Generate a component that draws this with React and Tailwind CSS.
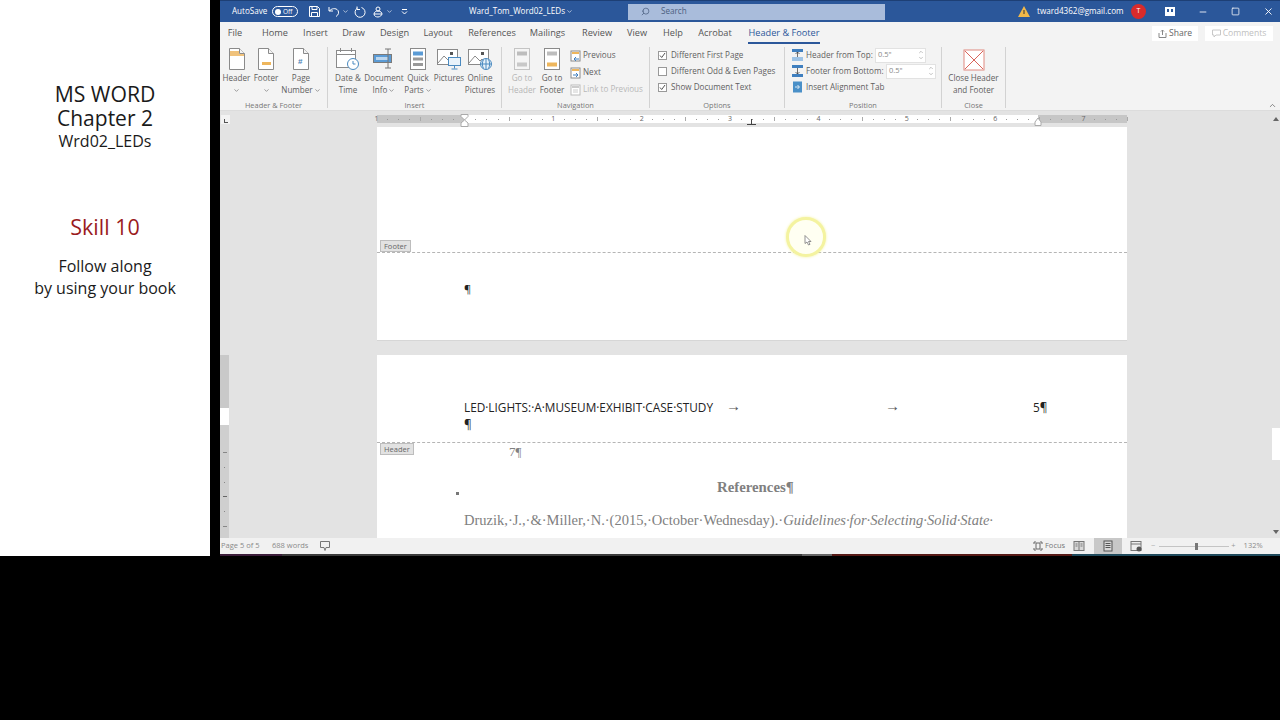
import { ChevronDown, ChevronUp, Search, Minus, Square, X } from 'lucide-react';

const tabs = [
  ['File', 'w-[30px]'],
  ['Home', 'w-[50px]'],
  ['Insert', 'w-[31px]'],
  ['Draw', 'w-[45px]'],
  ['Design', 'w-[37px]'],
  ['Layout', 'w-[50px]'],
  ['References', 'w-[58px]'],
  ['Mailings', 'w-[53px]'],
  ['Review', 'w-[46px]'],
  ['View', 'w-[34px]'],
  ['Help', 'w-[38px]'],
  ['Acrobat', 'w-[46px]'],
];

function PageIcon({ band }) {
  return (
    <svg width="20" height="24" viewBox="0 0 20 24" fill="none">
      <path d="M2.5 1.5h10l5 5v16h-15z" fill="#fff" stroke="#8a8a8a" />
      <path d="M12.5 1.5v5h5" fill="#f3f3f3" stroke="#8a8a8a" />
      {band === 'top' && <path d="M3 4h9v3h5v2H3z" fill="#f0c27b" />}
      {band === 'bottom' && <rect x="6" y="15" width="9" height="3" fill="#eeb65c" />}
      {band === 'num' && <text x="7" y="17" fontSize="8" fontWeight="700" fill="#4b7fb5" fontFamily="Liberation Sans, sans-serif">#</text>}
    </svg>
  );
}

function CalendarIcon() {
  return (
    <svg width="26" height="24" viewBox="0 0 26 24" fill="none">
      <rect x="1.5" y="3.5" width="19" height="17" fill="#fff" stroke="#8a8a8a" />
      <path d="M1.5 7.5h19M5.5 1v4M16.5 1v4" stroke="#8a8a8a" />
      <circle cx="18" cy="17" r="5.5" fill="#fff" stroke="#4a8ac0" />
      <path d="M18 14v3h2.5" stroke="#4a8ac0" />
    </svg>
  );
}

function DocInfoIcon() {
  return (
    <svg width="24" height="24" viewBox="0 0 24 24" fill="none">
      <rect x="1.5" y="7.5" width="18" height="8" fill="#5b9bd5" stroke="#7a7a7a" />
      <rect x="4" y="10" width="12" height="3" fill="#bcd6ee" />
      <path d="M13 2h6M13 21h6M16 2v19" stroke="#777" />
    </svg>
  );
}

function QuickIcon() {
  return (
    <svg width="18" height="24" viewBox="0 0 18 24" fill="none">
      <rect x="1.5" y="1.5" width="15" height="21" fill="#fff" stroke="#8a8a8a" />
      <rect x="4" y="4.5" width="10" height="4" fill="#5b9bd5" />
      <rect x="4" y="10.5" width="10" height="3" fill="#999" />
      <rect x="4" y="16" width="10" height="3" fill="#999" />
    </svg>
  );
}

function PictureIcon({ online }) {
  return (
    <svg width="26" height="24" viewBox="0 0 26 24" fill="none">
      <rect x="1.5" y="2.5" width="20" height="15" fill="#fff" stroke="#8a8a8a" />
      <path d="M2 16l6-7 5 5 2-2 5 5" stroke="#8a8a8a" />
      <rect x="14" y="5" width="3" height="3" fill="#555" />
      {online ? (
        <g stroke="#4a8ac0">
          <circle cx="19" cy="17" r="5.5" fill="#e8f2fa" />
          <path d="M13.5 17h11M19 11.5v11M16.5 12.5c-1.5 3-1.5 6 0 9M21.5 12.5c1.5 3 1.5 6 0 9" />
        </g>
      ) : (
        <g stroke="#4a8ac0">
          <rect x="12.5" y="10.5" width="12" height="8" fill="#e8f2fa" />
          <path d="M18.5 18.5v3M15.5 22h6" />
        </g>
      )}
    </svg>
  );
}

function GoToIcon({ active, top }) {
  const line = active ? '#8a8a8a' : '#c4c4c4';
  const band = active ? '#eeb65c' : '#c8c8c8';
  return (
    <svg width="18" height="24" viewBox="0 0 18 24" fill="none">
      <rect x="1.5" y="1.5" width="15" height="21" fill={active ? '#fff' : '#f5f5f5'} stroke={line} />
      <rect x="4" y="4.5" width="10" height="4" fill={top ? band : '#bdbdbd'} />
      <rect x="4" y="15.5" width="10" height="4" fill={top ? '#d2d2d2' : band} />
    </svg>
  );
}

function NavIcon({ type }) {
  const off = type === 'link';
  return (
    <svg width="11" height="12" viewBox="0 0 11 12" fill="none">
      <rect x="1" y="1" width="9" height="10" fill="#fff" stroke={off ? '#bbb' : '#8a8a8a'} />
      <rect x="2" y="2" width="7" height="2" fill={off ? '#ccc' : '#eeb65c'} />
      {type === 'prev' && <path d="M9 9H4l2-2M4 9l2 2" stroke="#3f7fbf" />}
      {type === 'next' && <path d="M3 8h5L6 6M8 8l-2 2" stroke="#3f7fbf" />}
      {off && <path d="M3 6h5M3 8h5" stroke="#ccc" />}
    </svg>
  );
}

function PosIcon({ type }) {
  return (
    <svg width="11" height="12" viewBox="0 0 11 12" fill="none">
      {type === 'top' && <><rect x="0" y="0" width="11" height="3" fill="#3f7fbf" /><rect x="0" y="8" width="11" height="4" fill="#9dc3e6" /><path d="M5.5 3v5M3.5 5l2-2 2 2" stroke="#333" strokeWidth=".7" /></>}
      {type === 'bottom' && <><rect x="0" y="9" width="11" height="3" fill="#3f7fbf" /><rect x="0" y="0" width="11" height="3" fill="#3f7fbf" /><path d="M5.5 3v6M3.5 7l2 2 2-2" stroke="#333" strokeWidth=".7" /></>}
      {type === 'tab' && <><rect x="1" y="0.5" width="9" height="11" fill="#4a90c8" /><path d="M3 6h4M5.5 4l2 2-2 2" stroke="#fff" strokeWidth=".8" /></>}
    </svg>
  );
}

function BigButton({ icon, lines, width, off, caret, under }) {
  return (
    <div className={`${width} shrink-0 flex flex-col items-center ${off ? 'text-[#b5b5b5]' : 'text-[#5f5f5f]'}`}>
      <div className="h-[24px] flex items-center justify-center">{icon}</div>
      <div className="mt-[1px] text-[8.100px] leading-[12px] text-center whitespace-nowrap">
        {lines.map((l, i) => (
          <div key={i} className="h-[12px]">
            {l}
            {caret && i === lines.length - 1 && <ChevronDown size={7} className="inline ml-[1px]" />}
          </div>
        ))}
        {under && <ChevronDown size={7} className="mx-auto mt-[3px]" />}
      </div>
    </div>
  );
}

function Group({ width, label, children }) {
  return (
    <div className={`${width} shrink-0 h-[61px] border-r border-[#d2d2d2] flex flex-col`}>
      <div className="flex-1 flex min-h-0">{children}</div>
      <div className="text-center text-[7.400px] leading-[10px] text-[#777] -mb-[2px]">{label}</div>
    </div>
  );
}

function CheckRow({ label, checked }) {
  return (
    <div className="h-[16px] flex items-center gap-[4px] text-[8.100px] text-[#5f5f5f] whitespace-nowrap">
      <div className="w-[9px] h-[9px] border border-[#999] bg-white flex items-center justify-center">
        {checked && (
          <svg width="7" height="7" viewBox="0 0 7 7" fill="none"><path d="M1 3.5l1.7 2L6 1" stroke="#555" /></svg>
        )}
      </div>
      {label}
    </div>
  );
}

function Spinner({ width }) {
  return (
    <div className={`${width} h-[15px] bg-white border border-[#e2e2e2] flex items-center justify-between pl-[2px] pr-[1px] text-[7.500px] text-[#888]`}>
      0.5"
      <div className="flex flex-col">
        <ChevronUp size={6} />
        <ChevronDown size={6} />
      </div>
    </div>
  );
}

function Ruler() {
  // one cell for each 1/8 inch, the inch numbers come from the position
  const cells = Array.from({ length: 69 }, (_, i) => i);
  return (
    <div className="w-[750px] h-[8px] mt-[4px] relative bg-[linear-gradient(90deg,#c6c6c6_87px,#fff_87px,#fff_661px,#c6c6c6_661px)]">
      <div className="flex -ml-[6px] h-full">
        {cells.map((i) => {
          const inch = (i - 8) / 8;
          let mark = <div className="w-[1px] h-[1px] bg-[#999]" />;
          if (i === 0) mark = '1';
          else if (i === 8) mark = null;
          else if (i % 8 === 0) mark = inch;
          else if (i % 4 === 0) mark = <div className="w-[1px] h-[4px] bg-[#aaa]" />;
          return (
            <div key={i} className="w-[11.060px] shrink-0 flex items-center justify-center text-[7px] text-[#666]">
              {mark}
            </div>
          );
        })}
      </div>
      <svg className="absolute left-[83px] -top-[1px]" width="9" height="13" viewBox="0 0 9 13" fill="none">
        <path d="M1 .5h7v2L4.5 6 1 2.5zM4.5 6L8 9v3.5H1V9z" fill="#fff" stroke="#aaa" />
      </svg>
      <svg className="absolute left-[370px] top-[4px]" width="9" height="6" viewBox="0 0 9 6" fill="none">
        <path d="M4.5 0v5M0 5.500h9" stroke="#444" />
      </svg>
      <svg className="absolute left-[657px] top-[2px]" width="8" height="9" viewBox="0 0 8 9" fill="none">
        <path d="M1 8.500h6V5L4 1 1 5z" fill="#fff" stroke="#aaa" />
      </svg>
    </div>
  );
}

function SideLabel({ text, className }) {
  return (
    <div className={`absolute left-[3px] h-[12px] px-[3px] bg-[#e2e2e2] border border-[#bdbdbd] text-[7.500px] leading-[10px] text-[#666] ${className}`}>
      {text}
    </div>
  );
}

function ViewIcon({ type }) {
  return (
    <svg width="12" height="12" viewBox="0 0 12 12" fill="none">
      {type === 'read' && <><rect x="1" y="1.500" width="10" height="9" fill="#d8d8d8" stroke="#777" /><path d="M6 1.500v9M2.500 4h2M2.500 6h2M7.500 4h2M7.500 6h2" stroke="#777" /></>}
      {type === 'print' && <><rect x="2" y="1" width="8" height="10" fill="#d8d8d8" stroke="#555" /><path d="M3.500 3.500h5M3.500 5.500h5M3.500 7.500h5" stroke="#555" /></>}
      {type === 'web' && <><rect x="1" y="1.500" width="10" height="9" fill="#eee" stroke="#777" /><path d="M1 4h10" stroke="#777" /><circle cx="9" cy="9" r="2.500" fill="#555" /></>}
    </svg>
  );
}

export default function App() {
  return (
    <div className="w-[1280px] h-[720px] bg-black overflow-hidden font-['Open_Sans',sans-serif]">
      <div className="h-[556px] flex">
        <div className="w-[210px] shrink-0 bg-white flex flex-col items-center text-[#1a1a1a] pt-[81px]">
          <div className="text-[21.200px] leading-[25px]">MS WORD</div>
          <div className="text-[21px] leading-[25px]">Chapter 2</div>
          <div className="text-[16px] leading-[21px]">Wrd02_LEDs</div>
          <div className="text-[21.500px] leading-[28px] text-[#9a1a20] mt-[61px]">Skill 10</div>
          <div className="text-[16px] leading-[22px] mt-[14px]">Follow along</div>
          <div className="text-[16px] leading-[22px]">by using your book</div>
        </div>
        <div className="w-[10px] shrink-0" />

        <div className="w-[1060px] shrink-0 flex flex-col relative">
          {/* title bar */}
          <div className="h-[22px] bg-[#2b579a] border-t border-[#1d3f75] flex items-center text-white text-[8.100px] relative">
            <span className="ml-[12px] w-[40px] whitespace-nowrap">AutoSave</span>
            <div className="w-[26px] h-[11px] rounded-full border border-white flex items-center gap-[2px] pl-[2px] text-[6.500px]">
              <div className="w-[6px] h-[6px] rounded-full bg-white" />
              Off
            </div>
            <svg className="ml-[11px]" width="11" height="11" viewBox="0 0 11 11" fill="none">
              <path d="M.5.500h8l2 2v8H.5zM3 .500v3h5v-3M2.500 10.500v-4h6v4" stroke="#fff" />
            </svg>
            <svg className="ml-[8px]" width="12" height="12" viewBox="0 0 12 12" fill="none">
              <path d="M1 1v4h4M1.500 5C3 2.500 8 1.500 10 4.500c1.200 2 .5 4.500-2 6" stroke="#fff" />
            </svg>
            <ChevronDown size={7} className="ml-[2px]" />
            <svg className="ml-[5px]" width="12" height="12" viewBox="0 0 12 12" fill="none">
              <path d="M7.500 1.500a5 5 0 1 1-4 .5M3 .500v3H6" stroke="#fff" />
            </svg>
            <svg className="ml-[7px]" width="10" height="12" viewBox="0 0 10 12" fill="none">
              <circle cx="5" cy="3" r="2" stroke="#fff" />
              <path d="M5 5c3 0 4 2 4 3s-2 3-4 3-4-1-4-3 2-3 4-3zM1 8h8" stroke="#fff" />
            </svg>
            <ChevronDown size={7} className="ml-[3px]" />
            <svg className="ml-[8px]" width="7" height="7" viewBox="0 0 7 7" fill="none">
              <path d="M1 1.500h5M1 3.500l2.500 2.500L6 3.500" stroke="#fff" />
            </svg>
            <span className="ml-[61px] w-[94px] whitespace-nowrap">Ward_Tom_Word02_LEDs</span>
            <ChevronDown size={7} className="ml-[3px]" />
            <div className="ml-[55px] w-[257px] h-[16px] bg-[#a9bcdb] flex items-center text-[#4b5f80]">
              <Search size={9} className="ml-[13px] scale-x-[-1]" />
              <span className="ml-[11px]">Search</span>
            </div>
            <svg className="ml-[133px]" width="12" height="11" viewBox="0 0 12 11">
              <path d="M6 0l6 11H0z" fill="#f0b84a" />
              <path d="M5.500 4h1v4h-1z" fill="#333" />
            </svg>
            <span className="ml-[7px] w-[88px] whitespace-nowrap">tward4362@gmail.com</span>
            <div className="ml-[6px] w-[15px] h-[15px] rounded-full bg-[#d92b2b] flex items-center justify-center text-[7px]">T</div>
            <svg className="ml-[19px]" width="10" height="9" viewBox="0 0 10 9">
              <rect width="10" height="9" fill="#fff" />
              <path d="M2 2h2v3H2zM6 2h2v3H6z" fill="#2b579a" />
            </svg>
            <Minus size={10} className="ml-[23px]" />
            <Square size={9} className="ml-[23px]" />
            <X size={11} className="ml-[23px]" />
          </div>

          {/* tabs */}
          <div className="h-[22px] bg-[#f3f3f3] flex items-center text-[9.200px] text-[#555]">
            {tabs.map(([t, w]) => (
              <div key={t} className={`${w} text-center whitespace-nowrap`}>{t}</div>
            ))}
            <div className="ml-[10px] w-[72px] h-full flex flex-col items-center justify-center relative text-[#2b579a]">
              <span className="whitespace-nowrap">Header &amp; Footer</span>
              <div className="absolute bottom-0 inset-x-0 h-[2px] bg-[#2b579a]" />
            </div>
            <div className="ml-auto w-[46px] h-[15px] bg-white flex items-center justify-center gap-[2px] text-[8.600px] text-[#666] whitespace-nowrap">
              <svg width="9" height="9" viewBox="0 0 9 9" fill="none"><path d="M1 4v4.500h7V4M4.500 6V1M3 2.500L4.500 1 6 2.500" stroke="#888" /></svg>
              Share
            </div>
            <div className="ml-[7px] mr-[7px] w-[68px] h-[15px] bg-white flex items-center justify-center gap-[2px] text-[8.600px] text-[#c0c0c0] whitespace-nowrap">
              <svg width="9" height="9" viewBox="0 0 9 9" fill="none"><path d="M.500 1h8v5H4L2 8V6H.500z" stroke="#c8c8c8" /></svg>
              Comments
            </div>
          </div>

          {/* ribbon */}
          <div className="h-[67px] bg-[#f3f3f3] border-b border-[#dcdcdc] flex pt-[3px] relative">
            <Group width="w-[108px]" label="Header & Footer">
              <BigButton width="w-[33px]" icon={<PageIcon band="top" />} lines={['Header']} under />
              <BigButton width="w-[26px]" icon={<PageIcon band="bottom" />} lines={['Footer']} under />
              <BigButton width="w-[44px]" icon={<PageIcon band="num" />} lines={['Page', 'Number']} caret />
            </Group>
            <Group width="w-[174px]" label="Insert">
              <div className="w-[5px] shrink-0" />
              <BigButton width="w-[30px]" icon={<CalendarIcon />} lines={['Date &', 'Time']} />
              <BigButton width="w-[42px]" icon={<DocInfoIcon />} lines={['Document', 'Info']} caret />
              <BigButton width="w-[26px]" icon={<QuickIcon />} lines={['Quick', 'Parts']} caret />
              <BigButton width="w-[36px]" icon={<PictureIcon />} lines={['Pictures']} />
              <BigButton width="w-[26px]" icon={<PictureIcon online />} lines={['Online', 'Pictures']} />
            </Group>
            <Group width="w-[148px]" label="Navigation">
              <div className="w-[5px] shrink-0" />
              <BigButton width="w-[30px]" off icon={<GoToIcon />} lines={['Go to', 'Header']} />
              <BigButton width="w-[30px]" icon={<GoToIcon active />} lines={['Go to', 'Footer']} />
              <div className="ml-[3px] flex flex-col text-[8.100px] text-[#5f5f5f] whitespace-nowrap">
                <div className="h-[17px] flex items-center gap-[2px]"><NavIcon type="prev" />Previous</div>
                <div className="h-[17px] flex items-center gap-[2px]"><NavIcon type="next" />Next</div>
                <div className="h-[17px] flex items-center gap-[2px] text-[#b8b8b8]"><NavIcon type="link" />Link to Previous</div>
              </div>
            </Group>
            <Group width="w-[135px]" label="Options">
              <div className="pl-[8px] flex flex-col">
                <CheckRow label="Different First Page" checked />
                <CheckRow label="Different Odd & Even Pages" />
                <CheckRow label="Show Document Text" checked />
              </div>
            </Group>
            <Group width="w-[157px]" label="Position">
              <div className="pl-[7px] flex flex-col text-[8.100px] text-[#5f5f5f] whitespace-nowrap">
                <div className="h-[16px] flex items-center gap-[3px]"><PosIcon type="top" /><span className="w-[66px]">Header from Top:</span><Spinner width="w-[51px]" /></div>
                <div className="h-[16px] flex items-center gap-[3px]"><PosIcon type="bottom" /><span className="w-[77px]">Footer from Bottom:</span><Spinner width="w-[50px]" /></div>
                <div className="h-[16px] flex items-center gap-[3px]"><PosIcon type="tab" />Insert Alignment Tab</div>
              </div>
            </Group>
            <Group width="w-[64px]" label="Close">
              <div className="w-[63px] flex flex-col items-center text-[8.100px] leading-[12px] text-[#5f5f5f] whitespace-nowrap">
                <svg className="mt-[2px]" width="22" height="22" viewBox="0 0 22 22" fill="none">
                  <rect x="1" y="1" width="20" height="20" fill="#fff" stroke="#e08a80" />
                  <path d="M2 2l18 18M20 2L2 20" stroke="#d9645a" />
                </svg>
                <div className="mt-[1px]">Close Header</div>
                <div>and Footer</div>
              </div>
            </Group>
            <ChevronUp size={9} className="absolute right-[3px] bottom-[0px] text-[#666]" />
          </div>

          {/* ruler */}
          <div className="h-[16px] bg-[#e3e3e3] flex">
            <div className="w-[157px] shrink-0 pl-[1px] pt-[4px]">
              <div className="w-[9px] h-[9px] bg-[#f3f3f3] flex items-end justify-center">
                <div className="w-[4px] h-[4px] border-l border-b border-[#555] mb-[1px]" />
              </div>
            </div>
            <Ruler />
            <div className="ml-auto w-[8px] h-full flex justify-center pt-[6px]">
              <div className="w-0 h-0 border-x-[3px] border-x-transparent border-b-[4px] border-b-[#666]" />
            </div>
          </div>

          {/* document */}
          <div className="h-[411px] bg-[#e3e3e3] flex">
            <div className="w-[9px] shrink-0 flex flex-col pt-[228px]">
              <div className="h-[53px] bg-[#c9c9c9]" />
              <div className="h-[17px] bg-white" />
              <div className="flex-1 bg-[#cfcfcf] flex flex-col justify-around items-center pt-[20px] pb-[4px] text-[6px] text-[#666]">
                <div className="w-[4px] h-[1px] bg-[#888]" />
                <div className="w-[1px] h-[1px] bg-[#888]" />
                <div className="w-[1px] h-[1px] bg-[#888]" />
                <div className="w-[4px] h-[1px] bg-[#666]" />
                <div className="w-[1px] h-[1px] bg-[#888]" />
                <div className="w-[4px] h-[1px] bg-[#888]" />
              </div>
            </div>

            <div className="w-[148px] shrink-0" />

            <div className="w-[750px] shrink-0 flex flex-col">
              <div className="h-[214px] shrink-0 bg-white border-b border-[#d6d6d6] relative">
                <div className="h-[126px] border-b border-dashed border-[#b5b5b5]" />
                <SideLabel text="Footer" className="top-[113px]" />
                <div className="pl-[87px] pt-[28px] text-[11px] leading-[16px] text-[#222]">¶</div>
              </div>
              <div className="h-[14px] shrink-0" />
              <div className="flex-1 bg-white relative overflow-hidden">
                <div className="h-[88px] border-b border-dashed border-[#b5b5b5] pl-[87px] pt-[44px] text-[11.800px] text-[#222] leading-[17px]">
                  <div className="flex whitespace-nowrap">
                    <span className="w-[262px]">LED·LIGHTS:·A·MUSEUM·EXHIBIT·CASE·STUDY</span>
                    <span className="w-[159px] -mt-[2px] text-[15px] leading-[17px] text-[#555]">→</span>
                    <span className="w-[148px] -mt-[2px] text-[15px] leading-[17px] text-[#555]">→</span>
                    <span>5¶</span>
                  </div>
                  <div>¶</div>
                </div>
                <SideLabel text="Header" className="top-[88px]" />
                <div className="font-['Liberation_Serif',serif] text-[#808080]">
                  <div className="pl-[132px] pt-[1px] text-[13px] leading-[15px]">7¶</div>
                  <div className="pt-[20px] pl-[340px] font-bold text-[14.800px] leading-[16px]">References¶</div>
                  <div className="relative pl-[87px] pt-[17px] text-[14.500px] leading-[16px] whitespace-nowrap">
                    <div className="absolute left-[79px] -top-[3px] w-[3px] h-[3px] bg-[#777]" />
                    Druzik,·J.,·&amp;·Miller,·N.·(2015,·October·Wednesday).·<i>Guidelines·for·Selecting·Solid·State·</i>
                  </div>
                </div>
              </div>
            </div>

            <div className="ml-auto w-[8px] flex flex-col items-center relative">
              <div className="mt-[301px] w-full h-[32px] bg-white" />
              <div className="mt-auto mb-[4px] w-0 h-0 border-x-[3px] border-x-transparent border-t-[4px] border-t-[#666]" />
            </div>
          </div>

          {/* status bar */}
          <div className="h-[16px] bg-[#f1f1f1] flex items-center text-[7.500px] text-[#8a8a8a] whitespace-nowrap">
            <span className="ml-[1px] w-[51px]">Page 5 of 5</span>
            <span className="w-[48px]">688 words</span>
            <svg width="10" height="10" viewBox="0 0 10 10" fill="none"><path d="M.500.500h9v6H6L5 9.500 4 6.500H.500z" stroke="#777" /></svg>
            <svg className="ml-[703px]" width="10" height="10" viewBox="0 0 10 10" fill="none"><path d="M1 3V1h2M7 1h2v2M9 7v2H7M3 9H1V7M3 2h4v6H3z" stroke="#666" /></svg>
            <span className="ml-[2px] w-[28px] text-[#777]">Focus</span>
            <ViewIcon type="read" />
            <div className="ml-[9px] w-[28px] h-full bg-[#c8c8c8] flex items-center justify-center"><ViewIcon type="print" /></div>
            <div className="ml-[8px]"><ViewIcon type="web" /></div>
            <span className="ml-[9px] text-[#aaa]">−</span>
            <div className="ml-[4px] w-[70px] h-[1px] bg-[#c4c4c4] relative">
              <div className="absolute left-[36px] -top-[3px] w-[3px] h-[7px] bg-[#777]" />
            </div>
            <span className="ml-[2px] text-[#999]">+</span>
            <span className="ml-[8px]">132%</span>
          </div>
          <div className="h-[2px] flex">
            <div className="w-[62px] bg-[#3c1d3a]" />
            <div className="w-[520px] bg-[#3b3b3b]" />
            <div className="w-[30px] bg-[#666]" />
            <div className="w-[240px] bg-[#571a16]" />
            <div className="flex-1 bg-[#1f4a5c]" />
          </div>

          {/* click highlight over the page */}
          <div className="absolute left-[566px] top-[217px] w-[40px] h-[40px] rounded-full border-[3px] border-[#f4f3a0] bg-[#fffff2] shadow-[0_0_3px_#f4f3a0] flex items-center justify-center">
            <svg className="mt-[6px] ml-[3px]" width="8" height="11" viewBox="0 0 8 11" fill="none">
              <path d="M1 .500v8l2-1.500 1.500 3 1.500-.7L4.500 6.500H7z" fill="#fff" stroke="#777" strokeWidth=".8" />
            </svg>
          </div>
        </div>
      </div>
    </div>
  );
}
